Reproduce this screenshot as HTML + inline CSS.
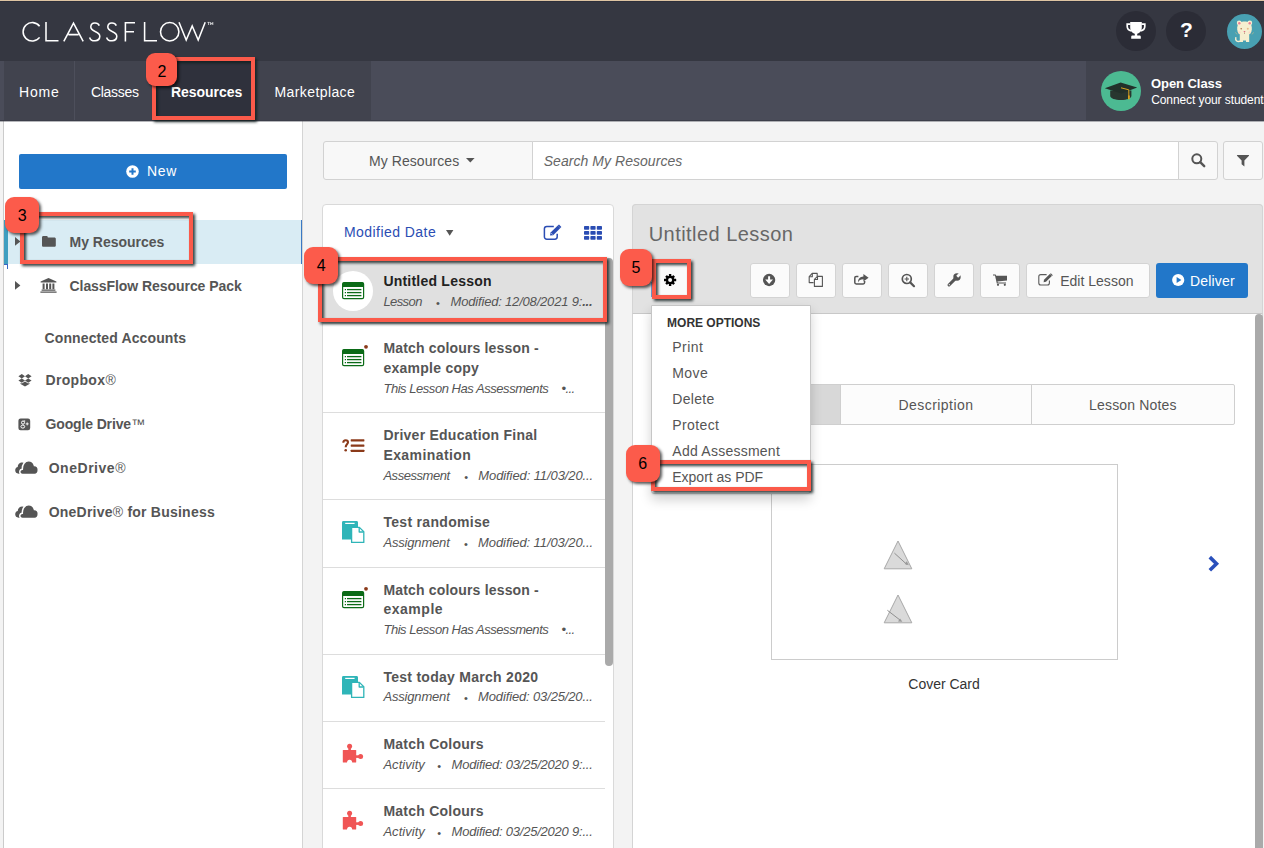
<!DOCTYPE html>
<html>
<head>
<meta charset="utf-8">
<title>ClassFlow - Resources</title>
<style>
*{box-sizing:border-box;margin:0;padding:0}
html,body{width:1264px;height:848px;overflow:hidden;background:#f3f3f3;font-family:"Liberation Sans",sans-serif;}
body{position:relative;color:#555}
.a{position:absolute}
.t{position:absolute;white-space:nowrap;line-height:1}
svg{position:absolute;overflow:visible}
/* header */
#topline{left:0;top:0;width:1264px;height:1px;background:#dec4a2}
#hdr{left:0;top:1px;width:1264px;height:60px;background:#353741}
#nav{left:0;top:61px;width:1264px;height:60px;background:#4a4c59}
#navitems{left:4px;top:61px;width:367px;height:60px;background:#41434e}
#navsel{left:152px;top:61px;width:103px;height:60px;background:#2f313c}
.navdiv{top:61px;width:1px;height:60px;background:#4d4f5b}
#openclass{left:1086px;top:61px;width:178px;height:60px;background:#41434e}
.circ{border-radius:50%}
/* sidebar */
#leftstrip{left:0;top:121px;width:4px;height:727px;background:#f3f3f3;border-right:1px solid #cbcbcb}
#sidebar{left:4px;top:121px;width:299px;height:727px;background:#fff;border-right:1px solid #d4d4d4}
#newbtn{left:19px;top:154px;width:268px;height:35px;background:#2277c9;border-radius:2px}
#selrow{left:4px;top:220px;width:298px;height:44px;background:#d9ecf4}
.sb{font-size:14px;font-weight:700;color:#555}
/* search */
#ddbtn{left:323px;top:141px;width:210px;height:39px;background:#f8f8f8;border:1px solid #d2d2d2;border-radius:3px 0 0 3px}
#search{left:532px;top:141px;width:647px;height:39px;background:#fff;border:1px solid #d2d2d2}
#sbtn{left:1178px;top:141px;width:40px;height:39px;background:#f8f8f8;border:1px solid #d2d2d2;border-radius:0 3px 3px 0}
#fbtn{left:1223px;top:141px;width:40px;height:39px;background:#f8f8f8;border:1px solid #d2d2d2;border-radius:3px}
/* list */
#list{left:322px;top:204px;width:292px;height:660px;background:#fff;border:1px solid #d9d9d9;border-radius:4px 4px 0 0}
.ldiv{left:323px;width:282px;height:1px;background:#ddd}
.lt{font-size:14px;font-weight:700;color:#555}
.ls{font-size:13px;font-style:italic;color:#555}
#lscroll{left:605px;top:258px;width:8px;height:408px;background:#aaa;border-radius:4px}
/* detail */
#detail{left:632px;top:204px;width:631px;height:660px;background:#fff;border:1px solid #d4d4d4;border-radius:4px 4px 0 0}
#dhead{left:632px;top:204px;width:631px;height:110px;background:#e2e2e2;border-radius:4px 4px 0 0;border:1px solid #d4d4d4;border-bottom:1px solid #c8c8c8}
.tb{top:263px;width:40px;height:35px;background:#fbfbfb;border:1px solid #d3d3d3;border-radius:3px}
#deliver{left:1156px;top:263px;width:92px;height:35px;background:#2277c9;border-radius:3px}
#dscroll{left:1255px;top:314px;width:8px;height:560px;background:#aaa;border-radius:4px 4px 0 0}
.tab{top:384px;height:41px;background:#fcfcfc;border:1px solid #cfcfcf}
#card{left:771px;top:464px;width:347px;height:196px;background:#fff;border:1px solid #ccc}
#menu{left:651px;top:305px;width:160px;height:189px;background:#fff;border:1px solid #c6c6c6;border-radius:0 0 3px 3px;box-shadow:0 6px 12px rgba(0,0,0,.175)}
.mi{font-size:14px;color:#555;left:672.3px}
/* annotations */
.frame{border:4px solid #fb5a4a;filter:drop-shadow(2px 2px 1.6px rgba(15,30,30,.88))}
.badge{background:#fc5b4b;border-radius:9px;box-shadow:2px 2px 3px rgba(0,0,0,.65);color:#000;font-size:16px;display:flex;align-items:center;justify-content:center;line-height:1;padding-top:2px}
</style>
</head>
<body>
<!-- HEADER -->
<div class="a" id="hdr"></div>
<div class="a" id="topline"></div>
<div class="a" style="left:0;top:1px;width:1264px;height:1px;background:#2d2f3b"></div>
<div class="a" id="nav"></div>
<div class="a" id="navitems"></div>
<div class="a" id="navsel"></div>
<div class="a navdiv" style="left:74px"></div>
<div class="a" id="openclass"></div>
<div class="a" style="left:0;top:120px;width:1264px;height:1px;background:#3c3e49"></div>
<div class="t" style="letter-spacing:0.78px;left:19px;top:85px;font-size:14px;color:#fff;">Home</div>
<div class="t" style="letter-spacing:-0.316px;left:91px;top:85px;font-size:14px;color:#fff;">Classes</div>
<div class="t" style="letter-spacing:-0.049px;left:171px;top:85px;font-size:14px;color:#fff;font-weight:700">Resources</div>
<div class="t" style="letter-spacing:0.403px;left:274.5px;top:85px;font-size:14px;color:#fff;">Marketplace</div>
<div class="a circ" style="left:1116px;top:11px;width:40px;height:40px;background:#2b2c36"></div>
<div class="a circ" style="left:1166px;top:11px;width:40px;height:40px;background:#2b2c36"></div>
<div class="a circ" style="left:1227px;top:14px;width:35px;height:35px;background:#48a0b2"></div>
<div class="a circ" style="left:1101px;top:71px;width:40px;height:40px;background:#4cba92"></div>
<div class="t" style="letter-spacing:-0.059px;left:1151px;top:77px;font-size:13px;color:#fff;font-weight:700">Open Class</div>
<div class="t" style="letter-spacing:-0.089px;left:1151.2px;top:94px;font-size:12px;color:#fff">Connect your students</div>

<!-- logo -->
<svg style="left:0;top:0" width="230" height="60" viewBox="0 0 230 60" fill="none" stroke="#fff" stroke-width="1.55" stroke-linecap="butt" stroke-linejoin="miter">
<path d="M39.6 26.2A9.2 9.2 0 1 0 39.6 37.4"/>
<path d="M46 22V40.8H58.5"/>
<path d="M63.8 41.3L73.5 23.2L83.2 41.3M68.4 34.6H78.6"/>
<path d="M99.3 25.6C97.8 22.2 91.2 21.8 90.8 26.8C90.4 32.4 100 30.4 99.8 36.4C99.5 42 91.2 42.2 89.6 37.4"/>
<path d="M116.3 25.6C114.8 22.2 108.2 21.8 107.8 26.8C107.4 32.4 117 30.4 116.8 36.4C116.5 42 108.2 42.2 106.6 37.4"/>
<path d="M125.4 41.5V22.8H135M125.4 31.8H134"/>
<path d="M144.6 22V40.8H157"/>
<circle cx="169.7" cy="31.8" r="9.2"/>
<path d="M179 22.3L186.2 40L192.2 26L198.2 40L205.2 22.3"/>
<path d="M207.5 22.4H209.7M208.6 22.4V25M210.6 25V22.4L211.7 24.2L212.8 22.4V25" stroke-width=".7"/>
</svg>
<!-- trophy -->
<svg style="left:1126px;top:21px" width="20" height="19" viewBox="0 0 20 19">
<path d="M4.2 1H15.8V6.5C15.8 10.2 13.4 12.3 11.2 12.8V14.6H13.6C14.4 14.6 14.8 15.2 14.8 16V17.8H5.2V16C5.2 15.2 5.6 14.6 6.4 14.6H8.8V12.8C6.6 12.3 4.2 10.2 4.2 6.5Z" fill="#fff"/>
<path d="M4.6 3.2H1.2V5.2C1.2 7.6 3 9.4 5.4 9.8M15.4 3.2H18.8V5.2C18.8 7.6 17 9.4 14.6 9.8" fill="none" stroke="#fff" stroke-width="1.7"/>
</svg>
<!-- help -->
<div class="t" style="left:1180px;top:19px;font-size:21px;font-weight:700;color:#fff">?</div>
<!-- avatar -->
<svg style="left:1227px;top:14px" width="35" height="35" viewBox="0 0 35 35">
<g fill="#f6efd0">
<rect x="10.200" y="7.600" width="14.600" height="14" rx="6"/>
<circle cx="12.200" cy="9" r="2.400"/><circle cx="22.800" cy="9" r="2.400"/>
<path d="M12.800 20H22.200L22.200 28H19V26.600H16V28H12.800Z"/>
<path d="M12.800 27.300C9.800 27.900 8.200 26.200 8.800 23.600" stroke="#f6efd0" stroke-width="1.400" fill="none" stroke-linecap="round"/>
</g>
<circle cx="12.300" cy="9.200" r="1.200" fill="#ee7f95"/><circle cx="22.700" cy="9.200" r="1.200" fill="#ee7f95"/>
<circle cx="14.200" cy="14.800" r=".8" fill="#b0744a"/><circle cx="20.800" cy="14.800" r="1" fill="#e9b98a"/>
<circle cx="12.400" cy="18.400" r="1.200" fill="#f8d9c4"/><circle cx="22.600" cy="18.400" r="1.200" fill="#f8d9c4"/>
<path d="M16.400 17H18.600L17.500 18.400Z" fill="#e36f86"/>
<path d="M17.500 18.600V19.800" stroke="#8a5a40" stroke-width=".6"/>
<path d="M8.400 18.400L10 20.400M26.600 18.400L25 20.400" stroke="#e8c67a" stroke-width=".5"/>
</svg>
<!-- grad cap -->
<svg style="left:1101px;top:71px" width="40" height="40" viewBox="0 0 40 40">
<path d="M9.2 19.4V24.8C9.2 27.6 14 29 20 29C26 29 30.4 27.6 30.4 24.8V19.4Z" fill="#28362f"/>
<path d="M3.8 17.2L19.6 11.6L36.2 16.6L20.4 22.6Z" fill="#22302a"/>
<path d="M20 16.8L27.8 18.8V26.4" fill="none" stroke="#d9a21f" stroke-width="1"/>
<path d="M27 24.6H28.8V28.2H27Z" fill="#d9a21f"/>
</svg>

<!-- SIDEBAR -->
<div class="a" id="leftstrip"></div>
<div class="a" id="sidebar"></div>
<div class="a" id="newbtn"></div>
<div class="t" style="letter-spacing:0.692px;left:147px;top:164px;font-size:14px;color:#fff;">New</div>
<div class="a" id="selrow"></div>
<div class="a" style="left:4px;top:220px;width:4px;height:44px;background:#3f9ec0"></div>
<div class="a" style="left:301px;top:220px;width:1px;height:44px;background:#3a78c4"></div>
<div class="a" style="left:4px;top:264px;width:4px;height:1px;background:#3a66c4"></div>
<div class="a" style="left:7px;top:264px;width:1px;height:5px;background:#3a66c4"></div>
<div class="t sb" style="letter-spacing:-0.003px;left:69.5px;top:235px">My Resources</div>
<div class="t sb" style="letter-spacing:-0.061px;left:69.5px;top:279px">ClassFlow Resource Pack</div>
<div class="t sb" style="letter-spacing:0.124px;left:44.5px;top:331px">Connected Accounts</div>
<div class="t sb" style="letter-spacing:0.33px;left:45.5px;top:373px">Dropbox<span style="font-weight:400">®</span></div>
<div class="t sb" style="letter-spacing:-0.137px;left:45.5px;top:417px">Google Drive<span style="font-weight:400">™</span></div>
<div class="t sb" style="letter-spacing:0.528px;left:48.7px;top:461px">OneDrive<span style="font-weight:400">®</span></div>
<div class="t sb" style="letter-spacing:0.225px;left:48.7px;top:505px">OneDrive<span style="font-weight:400">®</span> for Business</div>

<!-- sidebar icons -->
<svg style="left:126px;top:165px" width="13" height="13" viewBox="0 0 13 13"><circle cx="6.5" cy="6.5" r="6.3" fill="#fff"/><path d="M6.5 3.2V9.8M3.2 6.5H9.8" stroke="#2277c9" stroke-width="2"/></svg>
<svg style="left:15px;top:237px" width="6" height="9" viewBox="0 0 6 9"><path d="M0 0L5.4 4.4L0 8.8Z" fill="#555"/></svg>
<svg style="left:15px;top:281px" width="6" height="9" viewBox="0 0 6 9"><path d="M0 0L5.4 4.4L0 8.8Z" fill="#555"/></svg>
<svg style="left:42px;top:236px" width="14" height="11" viewBox="0 0 14 11"><path d="M1.4 0H4.6C5.4 0 5.8 .6 5.8 1.4H12.4C13.2 1.4 13.8 2 13.8 2.8V9.4C13.8 10.2 13.2 10.8 12.4 10.8H1.4C.6 10.8 0 10.2 0 9.4V1.4C0 .6 .6 0 1.4 0Z" fill="#555"/></svg>
<svg style="left:40px;top:278px" width="17" height="15" viewBox="0 0 17 15" fill="#555"><path d="M8.5 0L16.4 3.4V4.6H.6V3.4Z"/><path d="M2.6 5.4H4.6V11.2H2.6ZM6 5.4H8V11.2H6ZM9.2 5.4H11.2V11.2H9.2ZM12.4 5.4H14.4V11.2H12.4Z"/><path d="M1.6 11.6H15.4V12.8H1.6ZM.4 13.4H16.6V14.8H.4Z"/></svg>
<!-- dropbox -->
<svg style="left:18px;top:374px" width="14" height="13" viewBox="0 0 14 13" fill="#555"><path d="M3.800 0L7 2.200L3.800 4.400L.4 2.200ZM10.200 0L13.600 2.200L10.200 4.400L7 2.200ZM3.800 4.400L7 6.600L3.800 8.800L.4 6.600ZM10.200 4.400L13.600 6.600L10.200 8.800L7 6.600ZM7 7.400L10.200 9.600L11.400 8.800V9.900L7 12.600L2.600 9.900V8.800L3.800 9.600Z"/></svg>
<!-- gplus -->
<svg style="left:18px;top:418px" width="13" height="13" viewBox="0 0 13 13"><rect x=".4" y=".6" width="11.800" height="11.600" rx="2.200" fill="#555"/><g fill="none" stroke="#fff" stroke-width="1"><ellipse cx="5" cy="4.600" rx="1.500" ry="1.600"/><ellipse cx="4.800" cy="8.600" rx="1.900" ry="1.500"/><path d="M5.800 3H7.200"/><path d="M9.200 4.400V7.400M7.700 5.900H10.700" stroke-width=".9"/></g></svg>
<!-- clouds -->
<svg style="left:15px;top:460px" width="24" height="15" viewBox="0 0 24 15"><path d="M3.700 13.700C1.400 13.700 .2 12.100 .2 10.300C.2 8.500 1.400 7.300 2.800 7.100C2.600 4.400 4.800 2.300 7.300 2.400C8.900 2.400 10.300 3.200 11 4.400L10 13.700Z" fill="#555"/><path d="M7.500 14.500C5.500 14.500 4.600 12.900 4.800 11.500C5 10.100 6.100 9.200 7.300 9.200C7.100 4.600 9.800 .8 13.600 .8C16.400 .8 18.600 2.600 19.400 5.400C22 5.400 23.400 7.600 23.300 10C23.200 12.400 21.800 14.500 19.600 14.500Z" fill="#555" stroke="#fff" stroke-width="1.500"/></svg>
<svg style="left:15px;top:504px" width="24" height="15" viewBox="0 0 24 15"><path d="M3.700 13.700C1.400 13.700 .2 12.100 .2 10.300C.2 8.500 1.400 7.300 2.800 7.100C2.600 4.400 4.800 2.300 7.300 2.400C8.900 2.400 10.300 3.200 11 4.400L10 13.700Z" fill="#555"/><path d="M7.500 14.500C5.500 14.500 4.600 12.900 4.800 11.500C5 10.100 6.100 9.200 7.300 9.200C7.100 4.600 9.800 .8 13.600 .8C16.400 .8 18.600 2.600 19.400 5.400C22 5.400 23.400 7.600 23.300 10C23.200 12.400 21.800 14.500 19.600 14.500Z" fill="#555" stroke="#fff" stroke-width="1.500"/></svg>

<div class="a" style="left:0;top:121px;width:1264px;height:1px;background:rgba(60,62,73,.38)"></div>
<!-- SEARCH -->
<div class="a" id="search"></div>
<div class="a" id="ddbtn"></div>
<div class="a" id="sbtn"></div>
<div class="a" id="fbtn"></div>
<div class="t" style="letter-spacing:0.066px;left:369px;top:154px;font-size:14px;color:#555">My Resources</div>
<div class="t" style="letter-spacing:0.049px;left:543.7px;top:154px;font-size:14px;color:#666;font-style:italic">Search My Resources</div>

<!-- search/list-header icons -->
<svg style="left:466px;top:158px" width="9" height="5" viewBox="0 0 9 5"><path d="M0 0H8.600L4.300 4.600Z" fill="#555"/></svg>
<svg style="left:1191px;top:153px" width="15" height="15" viewBox="0 0 15 15" fill="none" stroke="#555"><circle cx="5.800" cy="5.800" r="4.500" stroke-width="2"/><path d="M9.200 9.200L13.200 13.200" stroke-width="2.400" stroke-linecap="round"/></svg>
<svg style="left:1237px;top:155px" width="12" height="12" viewBox="0 0 12 12"><path d="M.3 0H11.700C12.100 0 12.200 .4 12 .7L7.400 5.400V11.400L4.600 9.200V5.400L0 .7C-.2 .4 -.1 0 .3 0Z" fill="#555"/></svg>

<!-- LIST -->
<div class="a" id="list"></div>
<svg style="left:446px;top:230px" width="8" height="6" viewBox="0 0 8 6"><path d="M0 0H7.400L3.700 5.800Z" fill="#555"/></svg>
<svg style="left:543px;top:224px" width="20" height="17" viewBox="0 0 20 17" fill="none" stroke="#2b4db3"><path d="M14.200 9.800V12.800C14.200 14.200 13.200 15.200 11.800 15.200H3.800C2.400 15.200 1.400 14.200 1.400 12.800V4.800C1.400 3.400 2.400 2.400 3.800 2.400H10.800" stroke-width="1.500"/><path d="M7 11.600L7.600 8.600L14.800 1.400L17.400 4L10.200 11.200Z" fill="#2b4db3" stroke="none"/><path d="M16 .6L18.400 3L17.400 4L14.800 1.400Z" fill="#2b4db3" stroke="none"/><path d="M8.300 9.200L9.600 10.500" stroke="#fff" stroke-width=".7"/></svg>
<svg style="left:584px;top:226px" width="18" height="14" viewBox="0 0 18 14" fill="#2b4db3"><rect x="0" y="0" width="5.200" height="3.800" rx=".7"/><rect x="6.400" y="0" width="5.200" height="3.800" rx=".7"/><rect x="12.800" y="0" width="5.200" height="3.800" rx=".7"/><rect x="0" y="5" width="5.200" height="3.800" rx=".7"/><rect x="6.400" y="5" width="5.200" height="3.800" rx=".7"/><rect x="12.800" y="5" width="5.200" height="3.800" rx=".7"/><rect x="0" y="10" width="5.200" height="3.800" rx=".7"/><rect x="6.400" y="10" width="5.200" height="3.800" rx=".7"/><rect x="12.800" y="10" width="5.200" height="3.800" rx=".7"/></svg>

<div class="t" style="letter-spacing:0.442px;left:344px;top:225px;font-size:14px;color:#2b4db3;">Modified Date</div>
<div class="a" style="left:323px;top:257px;width:282px;height:67px;background:#e0e0e0"></div>
<div class="a circ" style="left:333px;top:271px;width:40px;height:40px;background:#fff"></div>
<div class="a" id="lscroll"></div>
<div class="a ldiv" style="top:412px"></div>
<div class="a ldiv" style="top:499px"></div>
<div class="a ldiv" style="top:567px"></div>
<div class="a ldiv" style="top:654px"></div>
<div class="a ldiv" style="top:721px"></div>
<div class="a ldiv" style="top:788px"></div>
<!-- list icons -->
<svg style="left:342px;top:278px" width="26" height="22" viewBox="0 -4 26 22"><rect x=".6" y=".6" width="21" height="16.100" rx="1.400" fill="#fff" stroke="#0b6b17" stroke-width="1.200"/><path d="M.6 2C.6 1.200 1.200 .6 2 .6H20.200C21 .6 21.600 1.200 21.600 2V5H.6Z" fill="#0b6b17"/><path d="M5 7.6H19.400" stroke="#0b6b17" stroke-width="1.300"/><path d="M2.800 7.6H4" stroke="#0b6b17" stroke-width="1.300"/><path d="M5 10.6H19.400" stroke="#0b6b17" stroke-width="1.300"/><path d="M2.800 10.6H4" stroke="#0b6b17" stroke-width="1.300"/><path d="M5 13.6H19.400" stroke="#0b6b17" stroke-width="1.300"/><path d="M2.800 13.6H4" stroke="#0b6b17" stroke-width="1.300"/></svg>
<svg style="left:342px;top:345px" width="26" height="22" viewBox="0 -4 26 22"><rect x=".6" y=".6" width="21" height="16.100" rx="1.400" fill="#fff" stroke="#0b6b17" stroke-width="1.200"/><path d="M.6 2C.6 1.200 1.200 .6 2 .6H20.200C21 .6 21.600 1.200 21.600 2V5H.6Z" fill="#0b6b17"/><path d="M5 7.6H19.400" stroke="#0b6b17" stroke-width="1.300"/><path d="M2.800 7.6H4" stroke="#0b6b17" stroke-width="1.300"/><path d="M5 10.6H19.400" stroke="#0b6b17" stroke-width="1.300"/><path d="M2.800 10.6H4" stroke="#0b6b17" stroke-width="1.300"/><path d="M5 13.6H19.400" stroke="#0b6b17" stroke-width="1.300"/><path d="M2.800 13.6H4" stroke="#0b6b17" stroke-width="1.300"/><circle cx="24" cy="-2.200" r="1.900" fill="#8b3a1a"/></svg>
<svg style="left:342px;top:587px" width="26" height="22" viewBox="0 -4 26 22"><rect x=".6" y=".6" width="21" height="16.100" rx="1.400" fill="#fff" stroke="#0b6b17" stroke-width="1.200"/><path d="M.6 2C.6 1.200 1.200 .6 2 .6H20.200C21 .6 21.600 1.200 21.600 2V5H.6Z" fill="#0b6b17"/><path d="M5 7.6H19.400" stroke="#0b6b17" stroke-width="1.300"/><path d="M2.800 7.6H4" stroke="#0b6b17" stroke-width="1.300"/><path d="M5 10.6H19.400" stroke="#0b6b17" stroke-width="1.300"/><path d="M2.800 10.6H4" stroke="#0b6b17" stroke-width="1.300"/><path d="M5 13.6H19.400" stroke="#0b6b17" stroke-width="1.300"/><path d="M2.800 13.6H4" stroke="#0b6b17" stroke-width="1.300"/><circle cx="24" cy="-2.200" r="1.900" fill="#8b3a1a"/></svg>
<svg style="left:342px;top:439px" width="8" height="13" viewBox="0 0 8 13"><path d="M1.300 3.700C1.300 1.900 2.500 1.200 3.700 1.200C5 1.200 6 2 6 3.300C6 5.300 3.700 5.300 3.700 8.200" fill="none" stroke="#8b3a1a" stroke-width="2.100"/><circle cx="3.700" cy="11.200" r="1.300" fill="#8b3a1a"/></svg>
<svg style="left:350px;top:439px" width="15" height="13" viewBox="0 0 15 13" fill="#8b3a1a"><rect x=".7" y=".3" width="13.700" height="2.100" rx=".4"/><rect x=".7" y="5.600" width="13.700" height="2.100" rx=".4"/><rect x=".7" y="10.800" width="13.700" height="2.100" rx=".4"/></svg>
<svg style="left:342px;top:521px" width="23" height="23" viewBox="0 0 23 23"><path d="M1.400 0H14.600C15.400 0 16 .6 16 1.400V18.600H0V1.400C0 .6 .6 0 1.400 0Z" fill="#2fb5b8"/><path d="M3.200 1.800H12.600V3H3.200Z" fill="#fff"/><path d="M9.600 6.400H17.400L21.800 10.800V21.400H9.600Z" fill="#fff" stroke="#2fb5b8" stroke-width="1.300" stroke-linejoin="round"/><path d="M17.200 6.600V11H21.600" fill="none" stroke="#2fb5b8" stroke-width="1.300" stroke-linejoin="round"/></svg>
<svg style="left:342px;top:676px" width="23" height="23" viewBox="0 0 23 23"><path d="M1.400 0H14.600C15.400 0 16 .6 16 1.400V18.600H0V1.400C0 .6 .6 0 1.400 0Z" fill="#2fb5b8"/><path d="M3.200 1.800H12.600V3H3.200Z" fill="#fff"/><path d="M9.600 6.400H17.400L21.800 10.800V21.400H9.600Z" fill="#fff" stroke="#2fb5b8" stroke-width="1.300" stroke-linejoin="round"/><path d="M17.200 6.600V11H21.600" fill="none" stroke="#2fb5b8" stroke-width="1.300" stroke-linejoin="round"/></svg>
<svg style="left:342px;top:743.9px" width="22" height="20" viewBox="0 0 22 20" fill="#f05555"><rect x=".8" y="6" width="13.400" height="12.600" rx=".5"/><circle cx="7.600" cy="2.200" r="2.500"/><rect x="6.300" y="3.500" width="2.600" height="3"/><circle cx="18.600" cy="12.600" r="2.500"/><rect x="14" y="11.300" width="3" height="2.600"/><circle cx="7.600" cy="18.200" r="2.500" fill="#fff"/><rect x="5.100" y="18.200" width="5" height="1" fill="#fff"/></svg>
<svg style="left:342px;top:811.3px" width="22" height="20" viewBox="0 0 22 20" fill="#f05555"><rect x=".8" y="6" width="13.400" height="12.600" rx=".5"/><circle cx="7.600" cy="2.200" r="2.500"/><rect x="6.300" y="3.500" width="2.600" height="3"/><circle cx="18.600" cy="12.600" r="2.500"/><rect x="14" y="11.300" width="3" height="2.600"/><circle cx="7.600" cy="18.200" r="2.500" fill="#fff"/><rect x="5.100" y="18.200" width="5" height="1" fill="#fff"/></svg>
<div class="t lt" style="letter-spacing:0.22px;left:383.4px;top:274px;color:#222">Untitled Lesson</div>
<div class="t ls" style="letter-spacing:-0.584px;left:383.4px;top:295px">Lesson</div><div class="t ls" style="left:436.1px;top:297.5px;font-size:11px;font-style:normal">•</div><div class="t ls" style="letter-spacing:-0.189px;left:450.6px;top:295px">Modified: 12/08/2021 9:<b>...</b></div>
<div class="t lt" style="letter-spacing:0.167px;left:383.4px;top:341px">Match colours lesson -</div>
<div class="t lt" style="letter-spacing:0.263px;left:383.4px;top:361px">example copy</div>
<div class="t ls" style="letter-spacing:-0.456px;left:383.4px;top:382px">This Lesson Has Assessments</div><div class="t ls" style="letter-spacing:-0.63px;left:561.6px;top:382px">•...</div>
<div class="t lt" style="letter-spacing:0.248px;left:383.4px;top:428px">Driver Education Final</div>
<div class="t lt" style="letter-spacing:0.415px;left:383.4px;top:448px">Examination</div>
<div class="t ls" style="letter-spacing:-0.457px;left:383.4px;top:469px">Assessment</div><div class="t ls" style="left:464.3px;top:471.5px;font-size:11px;font-style:normal">•</div><div class="t ls" style="letter-spacing:-0.097px;left:478.3px;top:469px">Modified: 11/03/20...</div>
<div class="t lt" style="letter-spacing:0.312px;left:383.4px;top:515px">Test randomise</div>
<div class="t ls" style="letter-spacing:-0.169px;left:383.4px;top:536px">Assignment</div><div class="t ls" style="left:463.9px;top:538.5px;font-size:11px;font-style:normal">•</div><div class="t ls" style="letter-spacing:-0.087px;left:478.1px;top:536px">Modified: 11/03/20...</div>
<div class="t lt" style="letter-spacing:0.176px;left:383.4px;top:583px">Match colours lesson -</div>
<div class="t lt" style="letter-spacing:0.526px;left:383.4px;top:602.3px">example</div>
<div class="t ls" style="letter-spacing:-0.456px;left:383.4px;top:623px">This Lesson Has Assessments</div><div class="t ls" style="letter-spacing:-0.63px;left:561.6px;top:623px">•...</div>
<div class="t lt" style="letter-spacing:0.278px;left:383.4px;top:670px">Test today March 2020</div>
<div class="t ls" style="letter-spacing:-0.169px;left:383.4px;top:690px">Assignment</div><div class="t ls" style="left:463.9px;top:692.5px;font-size:11px;font-style:normal">•</div><div class="t ls" style="letter-spacing:-0.146px;left:478.1px;top:690px">Modified: 03/25/20...</div>
<div class="t lt" style="letter-spacing:0.247px;left:383.4px;top:737px">Match Colours</div>
<div class="t ls" style="letter-spacing:0.033px;left:383.4px;top:758px">Activity</div><div class="t ls" style="left:437.3px;top:760.5px;font-size:11px;font-style:normal">•</div><div class="t ls" style="letter-spacing:-0.221px;left:451.6px;top:758px">Modified: 03/25/2020 9:...</div>
<div class="t lt" style="letter-spacing:0.247px;left:383.4px;top:804px">Match Colours</div>
<div class="t ls" style="letter-spacing:0.033px;left:383.4px;top:825px">Activity</div><div class="t ls" style="left:437.3px;top:827.5px;font-size:11px;font-style:normal">•</div><div class="t ls" style="letter-spacing:-0.221px;left:451.6px;top:825px">Modified: 03/25/2020 9:...</div>

<!-- DETAIL -->
<div class="a" id="detail"></div>
<div class="a" id="dhead"></div>
<div class="t" style="letter-spacing:0.459px;left:648.7px;top:224px;font-size:20px;color:#676767;">Untitled Lesson</div>
<div class="a" style="left:656px;top:263px;width:31.3px;height:32px;background:#fafafa"></div><div class="a" style="left:651px;top:282px;width:1px;height:15px;background:#3a78c4;opacity:.7"></div>
<div class="a tb" style="left:750px"></div>
<div class="a tb" style="left:796px"></div>
<div class="a tb" style="left:842px"></div>
<div class="a tb" style="left:888px"></div>
<div class="a tb" style="left:934px"></div>
<div class="a tb" style="left:980px"></div>
<div class="a tb" style="left:1026px;width:124px"></div>
<div class="t" style="letter-spacing:0.013px;left:1060.2px;top:274px;font-size:14px;color:#555">Edit Lesson</div>
<div class="a" id="deliver"></div>
<div class="t" style="letter-spacing:0.204px;left:1189.9px;top:274px;font-size:14px;color:#fff;">Deliver</div>
<!-- toolbar icons -->
<svg style="left:664px;top:274px" width="13" height="13" viewBox="0 0 13 13"><g fill="#000"><circle cx="6.100" cy="6" r="4.300"/><g id="gt"><rect x="4.900" y="0" width="2.400" height="12" rx=".3"/><rect x="0" y="4.800" width="12.200" height="2.400" rx=".3"/></g><g transform="rotate(45 6.100 6)"><rect x="4.900" y=".3" width="2.400" height="11.400" rx=".3"/><rect x=".4" y="4.800" width="11.400" height="2.400" rx=".3"/></g></g><circle cx="6.100" cy="6" r="2" fill="#f8f8f8"/></svg>
<svg style="left:763px;top:274px" width="13" height="13" viewBox="0 0 13 13"><circle cx="6.100" cy="6" r="6.150" fill="#555"/><path d="M5.100 2.200H7.100V5.600H10L6.100 9.900L2.200 5.600H5.100Z" fill="#fff"/></svg>
<svg style="left:808px;top:272px" width="16" height="16" viewBox="0 0 16 16" fill="none" stroke="#555" stroke-width="1.100" stroke-linejoin="round"><path d="M5.600 10.600H1.200V4.600L4.200 1.400H9.200V4.200"/><path d="M4.300 1.600V4.700H1.300"/><path d="M6.400 7.400L9.400 4.400H14.400V14.400H6.400Z" fill="#fbfbfb"/><path d="M9.500 4.600V7.500H6.500"/></svg>
<svg style="left:854px;top:274px" width="15" height="12" viewBox="0 0 15 12"><path d="M10.600 7V8.600C10.600 9.400 10 10 9.200 10H2.200C1.400 10 .8 9.400 .8 8.600V3.800C.8 3 1.400 2.400 2.200 2.400H4.400" fill="none" stroke="#555" stroke-width="1.500"/><path d="M9.400 0L14.600 3.800L9.400 7.600V5.200C6.600 5.200 5 6.200 4 8.400C4 4.800 6 2.600 9.400 2.400Z" fill="#555"/></svg>
<svg style="left:901px;top:273px" width="15" height="15" viewBox="0 0 15 15" fill="none" stroke="#555"><circle cx="5.800" cy="6" r="4.500" stroke-width="1.700"/><path d="M9.200 9.400L13 13.200" stroke-width="2.200" stroke-linecap="round"/><path d="M5.800 3.800V8.200M3.600 6H8" stroke-width="1.100"/></svg>
<svg style="left:947px;top:273px" width="14" height="14" viewBox="0 0 14 14"><path d="M2 12L8.600 5.400" stroke="#555" stroke-width="3" stroke-linecap="round"/><circle cx="10" cy="4" r="3.700" fill="#555"/><path d="M10.200 3.800L14.500 -.5" stroke="#fbfbfb" stroke-width="2.700"/><circle cx="2.300" cy="11.700" r=".6" fill="#fbfbfb"/></svg>
<svg style="left:993px;top:274px" width="15" height="12" viewBox="0 0 15 12" fill="#555"><path d="M0 .4H2.600L3.200 1.800H14V6.400L4.400 7.600L4.800 8.600H13V9.600H3.800L2 1.400H0Z"/><circle cx="5" cy="10.800" r="1.100"/><circle cx="11.800" cy="10.800" r="1.100"/></svg>
<svg style="left:1038px;top:273px" width="16" height="13" viewBox="0 0 16 13" fill="none" stroke="#5a5a5a"><path d="M11.400 7.600V10C11.400 11.200 10.600 12 9.400 12H2.800C1.600 12 .8 11.200 .8 10V3.600C.8 2.400 1.600 1.600 2.800 1.600H8.600" stroke-width="1.100"/><path d="M5.600 9.200L6 6.800L11.800 1L13.800 3L8 8.800Z" fill="#555" stroke="none"/><path d="M12.800 .2L14.800 2.200L14 3L12 1Z" fill="#555" stroke="none"/></svg>
<svg style="left:1172px;top:274px" width="13" height="13" viewBox="0 0 13 13"><circle cx="6.200" cy="6" r="6.100" fill="#fff"/><path d="M4.600 3V9L9.400 6Z" fill="#2277c9"/></svg>
<div class="a" id="dscroll"></div>
<div class="a tab" style="left:651px;width:190px;background:#d8d8d8"></div>
<div class="a tab" style="left:840px;width:192px"></div>
<div class="a tab" style="left:1031px;width:204px;border-radius:0 2px 2px 0"></div>
<div class="t" style="letter-spacing:0.467px;left:898.4px;top:398px;font-size:14px;color:#555;">Description</div>
<div class="t" style="letter-spacing:0.154px;left:1089.1px;top:398px;font-size:14px;color:#555;">Lesson Notes</div>
<div class="a" id="card"></div>
<!-- card icons -->
<svg style="left:883px;top:540px" width="30" height="30" viewBox="0 0 30 30"><path d="M15 1L28.800 28.800H1.200Z" fill="#dadada" stroke="#a8a8a8" stroke-width="1"/><path d="M11.400 13.100L24 24.600" stroke="#909090" stroke-width="1"/><path d="M25.800 25.200L21.600 24L23.800 21.200Z" fill="#999"/></svg>
<svg style="left:883px;top:594px" width="30" height="30" viewBox="0 0 30 30"><path d="M15 1L28.800 28.800H1.200Z" fill="#dadada" stroke="#a8a8a8" stroke-width="1"/><path d="M4.400 16.300L18 26.800" stroke="#909090" stroke-width="1"/><path d="M19.400 27.800L15 27.400L17 24.400Z" fill="#999"/></svg>
<svg style="left:1208px;top:556px" width="12" height="16" viewBox="0 0 12 16"><path d="M1.800 1.100L8.500 7.700L1.800 14.300" fill="none" stroke="#2a50bc" stroke-width="3.600"/></svg>
<div class="t" style="letter-spacing:-0.022px;left:908.3px;top:677px;font-size:14px;color:#333">Cover Card</div>

<!-- MENU -->
<div class="a" id="menu"></div>
<div class="t" style="letter-spacing:-0.013px;left:667.1px;top:317px;font-size:12px;font-weight:700;color:#333">MORE OPTIONS</div>
<div class="t mi" style="letter-spacing:0.476px;top:340px">Print</div>
<div class="t mi" style="letter-spacing:0.389px;top:366px">Move</div>
<div class="t mi" style="letter-spacing:0.306px;top:392px">Delete</div>
<div class="t mi" style="letter-spacing:0.39px;top:418px">Protect</div>
<div class="t mi" style="letter-spacing:0.248px;top:444px">Add Assessment</div>
<div class="t mi" style="letter-spacing:-0.019px;top:470px">Export as PDF</div>

<!-- ANNOTATIONS -->
<div class="a frame" style="left:152px;top:57px;width:103.2px;height:62.8px"></div>
<div class="a badge" style="left:145.7px;top:52.9px;width:31.4px;height:32.8px;padding-top:5px;padding-left:1px">2</div>
<div class="a frame" style="left:20.2px;top:212px;width:173.1px;height:52px"></div>
<div class="a badge" style="left:5.1px;top:196.9px;width:34.4px;height:36.6px">3</div>
<div class="a frame" style="left:318.3px;top:257.1px;width:289px;height:64.8px"></div>
<div class="a badge" style="left:304.2px;top:247px;width:34.2px;height:36.9px">4</div>
<div class="a frame" style="left:652px;top:259.1px;width:39.2px;height:39.8px"></div>
<div class="a badge" style="left:619.9px;top:249px;width:32.2px;height:36.7px">5</div>
<div class="a frame" style="left:650.6px;top:460.3px;width:160.4px;height:31.1px"></div>
<div class="a badge" style="left:625.9px;top:445px;width:33.7px;height:36.5px">6</div>
</body>
</html>
